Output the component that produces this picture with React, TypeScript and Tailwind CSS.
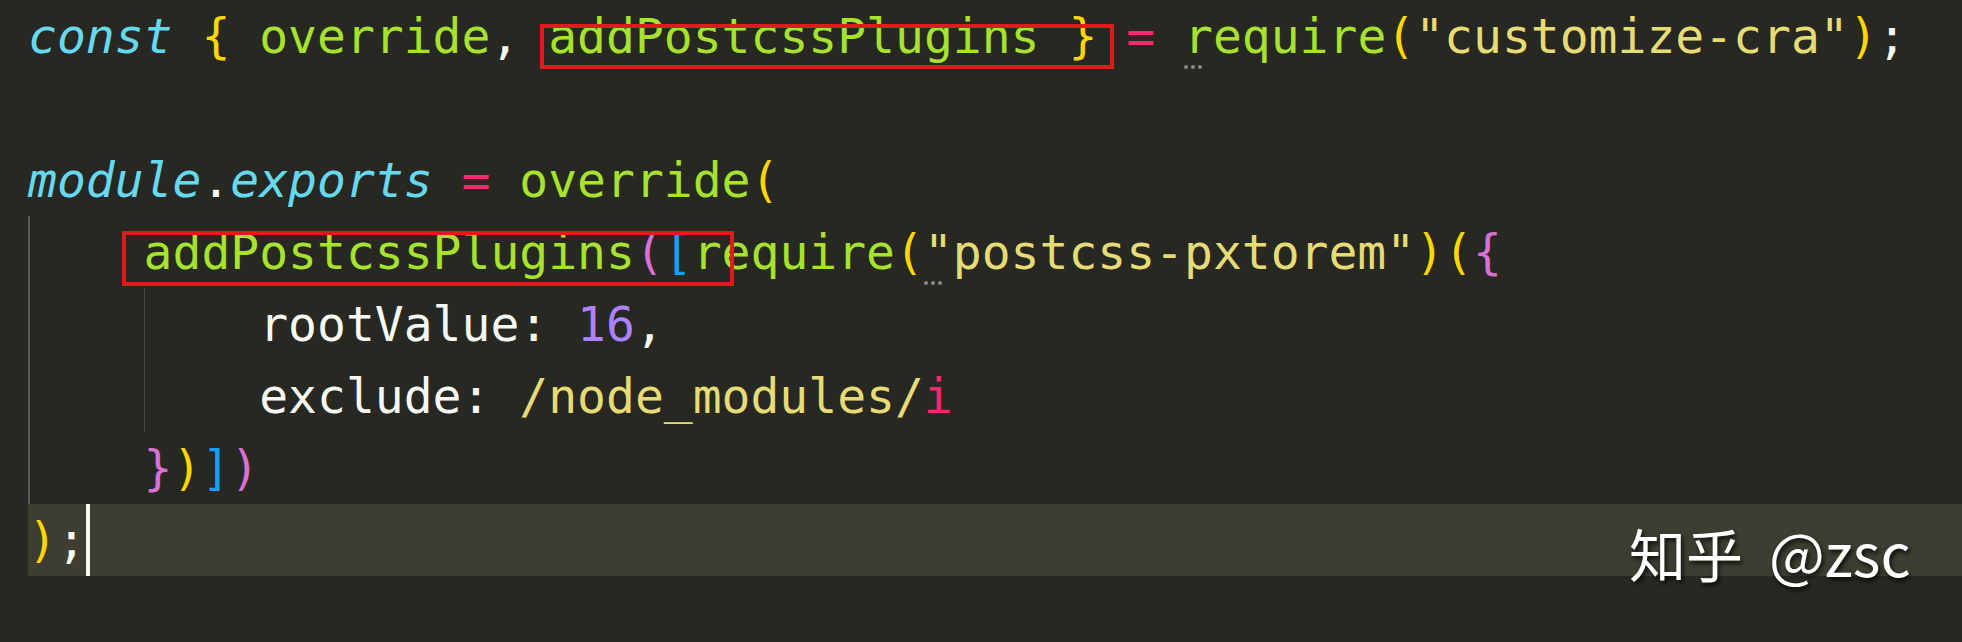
import React from "react";

const G = "text-[#a6e22e]"; // green identifiers
const W = "text-[#f8f8f2]"; // white
const S = "text-[#e6db74]"; // string
const P = "text-[#f92672]"; // pink
const C = "text-[#66d9ef] italic"; // cyan italic
const B1 = "text-[#ffd700]";
const B2 = "text-[#da70d6]";
const B3 = "text-[#179fff]";
const N = "text-[#ae81ff]";

function Indent({ guide }: { guide: string }) {
  return <span className={`inline-block w-[4ch] h-[72px] align-top ${guide}`} />;
}

function Dots({ pos }: { pos: string }) {
  return (
    <div className={`absolute flex gap-[3px] ${pos}`}>
      <span className="w-[4px] h-[4px] rounded-full bg-[#8a8a80]" />
      <span className="w-[4px] h-[4px] rounded-full bg-[#8a8a80]" />
      <span className="w-[4px] h-[4px] rounded-full bg-[#8a8a80]" />
    </div>
  );
}

export default function App() {
  return (
    <div className="relative w-[1962px] h-[642px] bg-[#272822] overflow-hidden">
      <div className="flex flex-col pl-[28px] font-['DejaVu_Sans_Mono',monospace] text-[48px] leading-[72px] whitespace-pre">
        <div className="h-[72px]">
          <span className={C}>const</span>
          <span className={W}> </span>
          <span className={B1}>{"{"}</span>
          <span className={W}> </span>
          <span className={G}>override</span>
          <span className={W}>, </span>
          <span className={G}>addPostcssPlugins</span>
          <span className={W}> </span>
          <span className={B1}>{"}"}</span>
          <span className={W}> </span>
          <span className={P}>=</span>
          <span className={W}> </span>
          <span className={G}>require</span>
          <span className={B1}>(</span>
          <span className={S}>"customize-cra"</span>
          <span className={B1}>)</span>
          <span className={W}>;</span>
        </div>
        <div className="h-[72px]" />
        <div className="h-[72px]">
          <span className={C}>module</span>
          <span className={W}>.</span>
          <span className={C}>exports</span>
          <span className={W}> </span>
          <span className={P}>=</span>
          <span className={W}> </span>
          <span className={G}>override</span>
          <span className={B1}>(</span>
        </div>
        <div className="h-[72px]">
          <Indent guide="shadow-[inset_2px_0_0_0_#5c5c56]" />
          <span className={G}>addPostcssPlugins</span>
          <span className={B2}>(</span>
          <span className={B3}>[</span>
          <span className={G}>require</span>
          <span className={B1}>(</span>
          <span className={S}>"postcss-pxtorem"</span>
          <span className={B1}>)</span>
          <span className={B1}>(</span>
          <span className={B2}>{"{"}</span>
        </div>
        <div className="h-[72px]">
          <Indent guide="shadow-[inset_2px_0_0_0_#5c5c56]" />
          <Indent guide="shadow-[inset_1px_0_0_0_#46463f]" />
          <span className={W}>rootValue: </span>
          <span className={N}>16</span>
          <span className={W}>,</span>
        </div>
        <div className="h-[72px]">
          <Indent guide="shadow-[inset_2px_0_0_0_#5c5c56]" />
          <Indent guide="shadow-[inset_1px_0_0_0_#46463f]" />
          <span className={W}>exclude: </span>
          <span className={S}>/node_modules/</span>
          <span className={P}>i</span>
        </div>
        <div className="h-[72px]">
          <Indent guide="shadow-[inset_2px_0_0_0_#5c5c56]" />
          <span className={B2}>{"}"}</span>
          <span className={B1}>)</span>
          <span className={B3}>]</span>
          <span className={B2}>)</span>
        </div>
        <div className="h-[72px] bg-[#3e3d32] flex items-start">
          <span className={B1}>)</span>
          <span className={W}>;</span>
          <span className="inline-block w-[4px] h-[72px] bg-[#f8f8f0]" />
        </div>
      </div>

      {/* hint dots */}
      <Dots pos="left-[1184px] top-[65px]" />
      <Dots pos="left-[924px] top-[281px]" />

      {/* red annotation boxes */}
      <div className="absolute left-[540px] top-[24px] w-[574px] h-[45px] border-[4px] border-[#e01b1b]" />
      <div className="absolute left-[122px] top-[231px] w-[612px] h-[55px] border-[4px] border-[#e01b1b]" />

      {/* watermark */}
      <div className="absolute left-[1629px] top-[522px] flex items-baseline leading-none text-white font-['Noto_Sans_CJK_SC','Noto_Sans',sans-serif] [text-shadow:2px_3px_4px_rgba(0,0,0,0.75)] whitespace-pre">
        <span className="text-[57px]">知乎</span>
        <span className="text-[59px] ml-[26px]">@zsc</span>
      </div>
    </div>
  );
}
